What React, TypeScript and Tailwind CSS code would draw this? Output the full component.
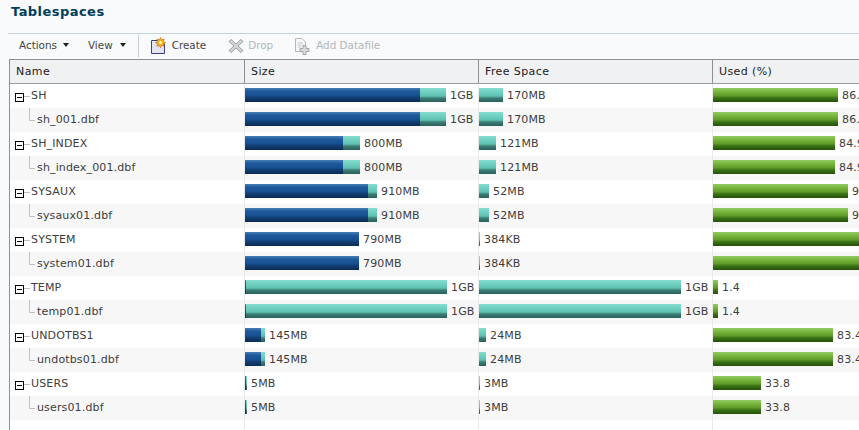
import React from "react";

type Row = {
  name: string;
  child: boolean;
  blue: number;
  teal: number;
  size: string;
  free: number;
  freeLabel: string;
  used: number;
  usedLabel: string;
};

const groups: [string, string, number, number, string, number, string, number, string][] = [
  ["SH", "sh_001.dbf", 175, 26, "1GB", 24, "170MB", 125, "86.32"],
  ["SH_INDEX", "sh_index_001.dbf", 98, 17, "800MB", 17, "121MB", 122, "84.91"],
  ["SYSAUX", "sysaux01.dbf", 123, 9, "910MB", 10, "52MB", 135, "94.33"],
  ["SYSTEM", "system01.dbf", 114, 0, "790MB", 1, "384KB", 146, "99.95"],
  ["TEMP", "temp01.dbf", 1, 201, "1GB", 202, "1GB", 5, "1.4"],
  ["UNDOTBS1", "undotbs01.dbf", 16, 4, "145MB", 7, "24MB", 120, "83.45"],
  ["USERS", "users01.dbf", 1, 1, "5MB", 1, "3MB", 48, "33.8"],
];

const rows: Row[] = groups.flatMap(([a, b, blue, teal, size, free, freeLabel, used, usedLabel]) =>
  [a, b].map((name, i) => ({ name, child: i === 1, blue, teal, size, free, freeLabel, used, usedLabel }))
);

function Bar({ width, kind }: { width: number; kind: "blue" | "teal" | "green" }) {
  const cls =
    kind === "blue"
      ? "bg-[linear-gradient(#4a80b4_0%,#1f5a9c_22%,#174f90_55%,#123f74_68%,#0a2c52_100%)]"
      : kind === "teal"
        ? "bg-[linear-gradient(#86dccf_0%,#68cbbb_40%,#5fbfb0_58%,#3a7d75_72%,#2a5f5a_100%)]"
        : "bg-[linear-gradient(#93cb62_0%,#6fae35_35%,#5f9c2a_55%,#3a7016_72%,#28500c_100%)]";
  return <div className={`mb-[2px] h-[14px] shrink-0 ${cls}`} style={{ width }} />;
}

function Cell({ children, last }: { children: React.ReactNode; last?: boolean }) {
  return (
    <div className={`flex h-full items-center overflow-hidden whitespace-nowrap ${last ? "" : "border-r border-[#e9eaec]"}`}>
      {children}
    </div>
  );
}

function CreateIcon() {
  return (
    <svg width="18" height="18" viewBox="0 0 18 18">
      <path d="M2.5 3.5H11L15.5 7V16.5H2.5Z" fill="#e6e4f4" stroke="#3a3f86" />
      <path d="M10.5 3.5V7.5H15" fill="#fff" stroke="#8a8fc0" />
      <path d="M11.5 0.5l1.2 2.3 2.5-.7-.8 2.4 2.3 1.2-2.3 1.1.8 2.5-2.5-.8-1.2 2.3-1.1-2.3-2.5.8.8-2.5-2.3-1.1 2.3-1.2-.8-2.4 2.5.7z" fill="#f3b61f" stroke="#c8641a" strokeWidth=".6" />
      <circle cx="11.5" cy="5.5" r="1.5" fill="#fdf3a0" />
    </svg>
  );
}

function DropIcon() {
  return (
    <svg width="16" height="16" viewBox="0 0 16 16">
      <path d="M3 1.5L8 6l5-4.5 2 2L10 8l5 4.5-2 2L8 10l-5 4.5-2-2L6 8 1 3.5z" fill="#d4d6d8" stroke="#9a9c9f" />
    </svg>
  );
}

function AddIcon() {
  return (
    <svg width="18" height="18" viewBox="0 0 18 18">
      <path d="M2.5 1.5H9L12.5 5V14.5H2.5Z" fill="#f6f7f8" stroke="#b5b8bb" />
      <path d="M4.5 6H10M4.5 8H9M4.5 10H8" stroke="#c9cbce" />
      <path d="M10 8.5h3v3h3v3h-3v3h-3v-3H7v-3h3z" fill="#d7dadc" stroke="#a3a6a9" />
    </svg>
  );
}

function Caret() {
  return <span className="inline-block h-0 w-0 border-x-[3.5px] border-t-[4px] border-x-transparent border-t-[#222]" />;
}

export default function App() {
  return (
    <div className="flex h-[430px] w-[859px] flex-col overflow-hidden bg-[#f8fafc] font-['DejaVu_Sans',sans-serif] text-[11px] text-[#3d3d3d]">
      <div className="flex h-[33px] items-start pl-[11px] pt-[4px]">
        <h1 className="text-[13px] font-bold leading-[16px] tracking-[0.45px] text-[#003d5b]">Tablespaces</h1>
      </div>
      <div className="ml-[8px] flex h-[26px] items-center border-t border-[#c4d1d9] pb-[2px] text-[10.4px] text-[#444]">
        <span className="ml-[11px] flex items-center gap-[6px]">Actions<Caret /></span>
        <span className="ml-[19px] flex items-center gap-[7px]">View<Caret /></span>
        <span className="ml-[12px] h-[22px] w-px bg-[#c4ced6]" />
        <span className="ml-[10px] flex items-center gap-[5px]"><CreateIcon />Create</span>
        <span className="ml-[22px] flex items-center gap-[4px] text-[#b3b6b9]"><DropIcon />Drop</span>
        <span className="ml-[20px] flex items-center gap-[5px] text-[#b3b6b9]"><AddIcon />Add Datafile</span>
      </div>
      <div className="ml-[9px] flex flex-1 flex-col border-l border-t border-[#8c9094] bg-white">
        <div className="grid h-[24px] shrink-0 grid-cols-[235px_234px_234px_1fr] border-b border-[#9a9da1] bg-[#f0f1f3] tracking-[0.4px] text-[#222]">
          {["Name", "Size", "Free Space", "Used (%)"].map((h, i) => (
            <div key={h} className={`flex items-center pl-[6px] pt-px ${i < 3 ? "border-r border-[#8c9094]" : ""}`}>{h}</div>
          ))}
        </div>
        {rows.map((r) => (
          <div
            key={r.name}
            className={`grid h-[24px] shrink-0 grid-cols-[235px_234px_234px_1fr] ${r.child ? "bg-[#f7f7f8]" : "bg-white"}`}
          >
            <Cell>
              {r.child ? (
                <span className="relative ml-[27px] tracking-[0.15px]">
                  <span className="absolute left-[-8px] top-[-4px] h-[13px] w-[6px] border-b border-l border-[#bfc2c5]" />
                  {r.name}
                </span>
              ) : (
                <>
                  <span className="relative top-px ml-[5px] flex h-[9px] w-[9px] items-center justify-center border border-black bg-white">
                    <span className="h-px w-[5px] bg-black" />
                  </span>
                  <span className="h-px w-[6px] bg-[#bfc2c5]" />
                  <span className="ml-px tracking-[0.15px]">{r.name}</span>
                </>
              )}
            </Cell>
            <Cell>
              <Bar width={r.blue} kind="blue" />
              {r.teal > 0 && <Bar width={r.teal} kind="teal" />}
              <span className="ml-[4px] tracking-[0.15px]">{r.size}</span>
            </Cell>
            <Cell>
              <Bar width={r.free} kind="teal" />
              <span className="ml-[4px] tracking-[0.15px]">{r.freeLabel}</span>
            </Cell>
            <Cell last>
              <Bar width={r.used} kind="green" />
              <span className="ml-[4px] tracking-[0.15px]">{r.usedLabel}</span>
            </Cell>
          </div>
        ))}
        <div className="grid flex-1 grid-cols-[235px_234px_234px_1fr]">
          <div className="border-r border-[#e9eaec]" />
          <div className="border-r border-[#e9eaec]" />
          <div className="border-r border-[#e9eaec]" />
          <div />
        </div>
      </div>
    </div>
  );
}
